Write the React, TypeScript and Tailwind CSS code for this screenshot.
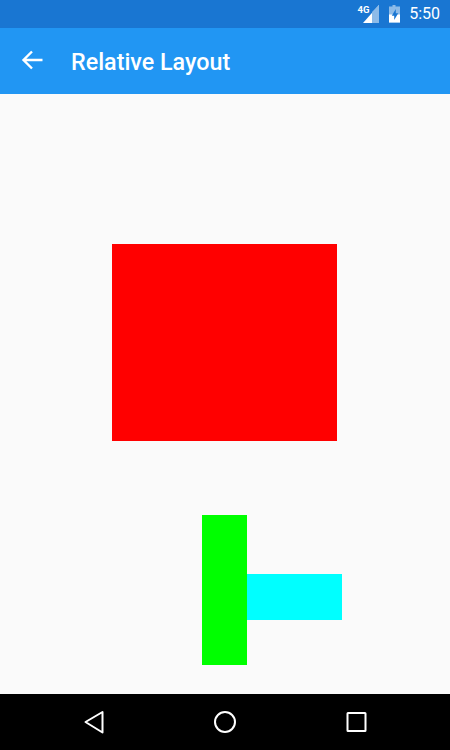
const App = () => {
  return (
    <div className="w-[450px] h-[750px] flex flex-col overflow-hidden bg-[#fafafa] font-['Roboto',sans-serif]">
      {/* status bar */}
      <div className="h-[28px] bg-[#1976d2] flex items-center justify-end text-white">
        <svg width="24" height="20" viewBox="0 0 24 20" className="mr-[8px]">
          <path d="M23 1V19H7z" fill="#fff" />
          <path d="M23 1V19H16V8z" fill="#8dbbe8" />
          <text x="1.5" y="9" fontSize="9.5" fontWeight="700" fill="#fff" fontFamily="Roboto, sans-serif">4G</text>
        </svg>
        <svg width="14" height="20" viewBox="0 0 14 20" className="mr-[7px]">
          <path d="M4.5 1h3v1.5h4.5V18.500H1V2.500h3.500z" fill="#8dbbe8" />
          <path d="M1 10.500h11v8H1z" fill="#fff" />
          <path d="M7.800 5l-4 6.800h2.400v4.200l4-6.800H7.800z" fill="#1976d2" />
        </svg>
        <span className="text-[16px] leading-none mr-[10px]">5:50</span>
      </div>

      {/* app bar */}
      <div className="h-[66px] bg-[#2196f3] flex items-center text-white">
        <svg width="24" height="24" viewBox="0 0 24 24" className="ml-[21px] mb-[2px]">
          <path d="M21.500 12H3M11 3.500 2.500 12l8.500 8.500" fill="none" stroke="#fff" strokeWidth="2.400" />
        </svg>
        <span className="ml-[26px] mt-[3px] text-[23.300px] font-medium leading-none">Relative Layout</span>
      </div>

      {/* content */}
      <div className="flex-1 flex flex-col">
        <div className="w-[225px] h-[197px] bg-[#ff0000] ml-[112px] mt-[150px]" />
        <div className="flex items-start ml-[202px] mt-[74px]">
          <div className="w-[45px] h-[150px] bg-[#00ff00]" />
          <div className="w-[95px] h-[46px] bg-[#00ffff] mt-[59px]" />
        </div>
      </div>

      {/* nav bar */}
      <div className="h-[56px] bg-black">
        <svg width="450" height="56" viewBox="0 0 450 56" fill="none" stroke="#fff" strokeWidth="2" strokeLinejoin="round">
          <path d="M102.500 18v20.500L85.500 28z" />
          <circle cx="225" cy="28" r="10" />
          <rect x="347.500" y="19" width="18" height="18" rx="0.500" />
        </svg>
      </div>
    </div>
  );
};

export default App;
